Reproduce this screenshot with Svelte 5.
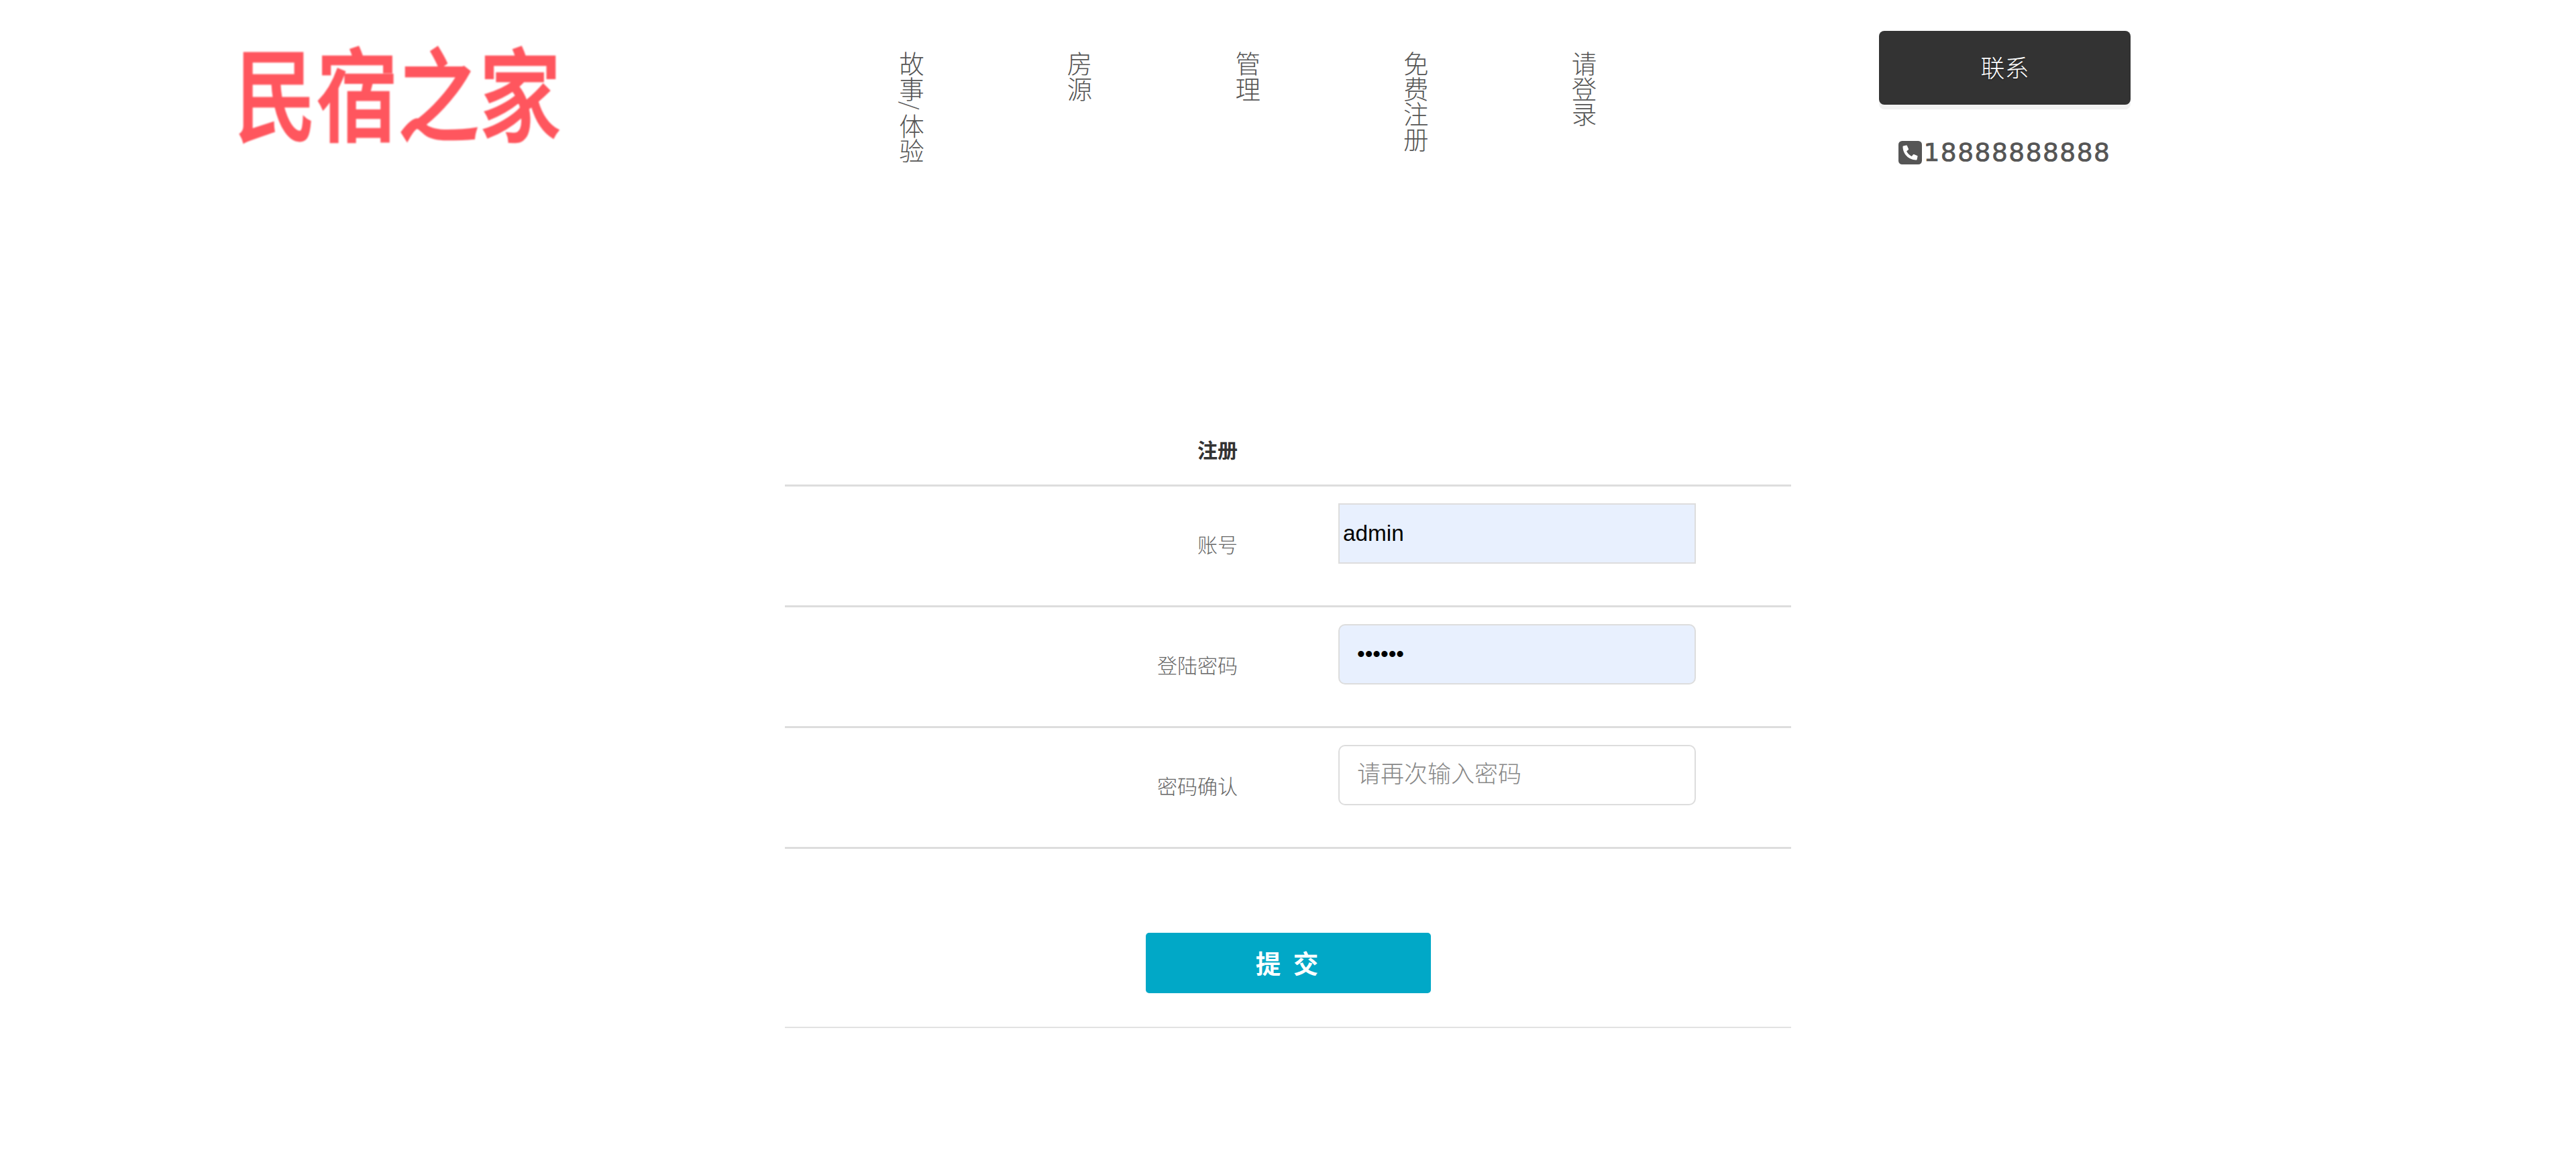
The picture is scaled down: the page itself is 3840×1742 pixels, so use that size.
<script>
  const links = ['故事/体验', '房源', '管理', '免费注册', '请登录'];
  const rows = [
    { label: '账号', type: 'text', value: 'admin', cls: 'square filled' },
    { label: '登陆密码', type: 'password', value: '123456', cls: 'filled' },
    { label: '密码确认', type: 'password', value: '', cls: '', placeholder: '请再次输入密码' }
  ];
</script>

<div class="page">
  <header class="header">
    <a class="logo" href="#top"><span>民宿之家</span></a>
    <nav class="nav">
      {#each links as link}
        <a class="link" href="#top">
          {#each link.split('/') as part, i}{#if i}<span class="slash">/</span>{/if}{part}{/each}
        </a>
      {/each}
    </nav>
    <div class="contact">
      <button class="call" type="button">联系</button>
      <p class="phone">
        <svg class="phone-icon" viewBox="0 32 448 448" aria-hidden="true">
          <rect x="0" y="32" width="448" height="448" rx="70" fill="#555" />
          <path
            transform="rotate(90 224 256) translate(224 256) scale(0.88) translate(-224 -256)"
            fill="#fff"
            d="M94 416c-7.033 0-13.057-4.873-14.616-11.627l-14.998-65a15 15 0 0 1 8.707-17.16l69.999-29.999a15 15 0 0 1 17.518 4.289l30.997 37.885c48.944-22.963 88.297-62.858 110.891-111.746l-37.885-30.997a15 15 0 0 1-4.289-17.518l30-69.998a15 15 0 0 1 17.16-8.707l65 14.998A14.997 14.997 0 0 1 384 126c0 160.292-129.945 290-290 290z"
          />
        </svg>
        <span>18888888888</span>
      </p>
    </div>
  </header>

  <form class="form">
    <div class="row head"><span class="label">注册</span></div>
    {#each rows as row}
      <div class="row">
        <span class="label">{row.label}</span>
        <input class={row.cls} type={row.type} value={row.value} placeholder={row.placeholder ?? ''} />
      </div>
    {/each}
    <div class="row actions">
      <button class="submit" type="button">提 交</button>
    </div>
  </form>
</div>

<style>
  :global(body) {
    margin: 0;
    background: #fff;
  }

  .page {
    min-height: 1742px;
    font-family: "Noto Sans CJK SC", "Liberation Sans", sans-serif;
    font-weight: 300;
  }

  .header {
    display: flex;
    align-items: flex-start;
    height: 654px;
    padding-left: 350px;
    box-sizing: border-box;
  }

  .logo {
    display: block;
    width: 486px;
    margin-top: 62px;
    height: 143px;
    color: #ff565e;
    text-decoration: none;
    font-size: 121.5px;
    line-height: 143px;
    font-weight: 500;
    white-space: nowrap;
    -webkit-text-stroke: 2px #ff565e;
  }

  .logo span {
    display: block;
    transform: scaleY(1.24);
    filter: blur(0.8px);
  }

  .nav {
    display: flex;
    margin-left: 504px;
    padding-top: 76px;
  }

  .link {
    width: 250.6px;
    writing-mode: vertical-lr;
    text-orientation: mixed;
    height: 180px;
    font-size: 37.5px;
    line-height: 37.5px;
    color: #555;
    text-decoration: none;
  }

  .slash {
    font-size: 32px;
    line-height: 0;
    letter-spacing: 5px;
  }

  .contact {
    display: flex;
    flex-direction: column;
    align-items: center;
    width: 375px;
    margin-left: 208px;
    padding-top: 46px;
  }

  .call {
    width: 375px;
    height: 110px;
    padding: 0 0 4px;
    border: 0;
    border-radius: 8px;
    background: #333;
    box-shadow: 0 7px 0 #f2f2f2;
    color: #fff;
    font: inherit;
    font-size: 36px;
    text-shadow: 0 1px 2px rgba(0, 0, 0, 0.6);
  }

  .phone {
    display: flex;
    align-items: center;
    gap: 2px;
    margin: 54px 0 0;
    font-family: "DejaVu Sans", "Liberation Sans", sans-serif;
    font-weight: 400;
    font-size: 37.5px;
    line-height: 35px;
    letter-spacing: 1.5px;
    color: #555;
    -webkit-text-stroke: 0.7px #555;
  }

  .phone-icon {
    display: block;
    width: 35px;
    height: 35px;
  }

  .form {
    width: 1500px;
    margin: 0 auto;
  }

  .row {
    display: flex;
    align-items: flex-start;
    box-sizing: border-box;
    height: 180px;
    border-bottom: 3px solid #ddd;
  }

  .row.head {
    height: 71px;
    font-weight: 700;
    color: #333;
  }

  .label {
    width: 675px;
    padding-top: 70px;
    text-align: right;
    font-size: 30px;
    line-height: 30px;
    color: #666;
  }

  .head .label {
    padding-top: 0;
    color: #333;
  }

  input {
    box-sizing: border-box;
    width: 533px;
    height: 90px;
    margin: 25px 0 0 150px;
    padding: 0 26px;
    border: 2px solid #ddd;
    border-radius: 10px;
    background: #fff;
    font-family: "Liberation Sans", sans-serif;
    font-size: 33.33px;
    color: #000;
    outline: none;
  }

  input::placeholder {
    font-family: "Noto Sans CJK SC", sans-serif;
    font-weight: 300;
    font-size: 35px;
    color: #888;
  }

  input.filled {
    background: #e8f0fe;
  }

  input.square {
    border-radius: 0;
    padding: 0 5px;
  }

  .row.actions {
    display: flex;
    justify-content: center;
    height: 267px;
    padding-top: 125px;
    border-bottom: 2px solid #e2e2e2;
  }

  .submit {
    width: 425px;
    height: 90px;
    padding: 0 0 4px 2px;
    border: 0;
    border-radius: 5px;
    background: #01a8c7;
    color: #fff;
    font: inherit;
    font-weight: 700;
    font-size: 37.5px;
    letter-spacing: 5px;
  }
</style>
